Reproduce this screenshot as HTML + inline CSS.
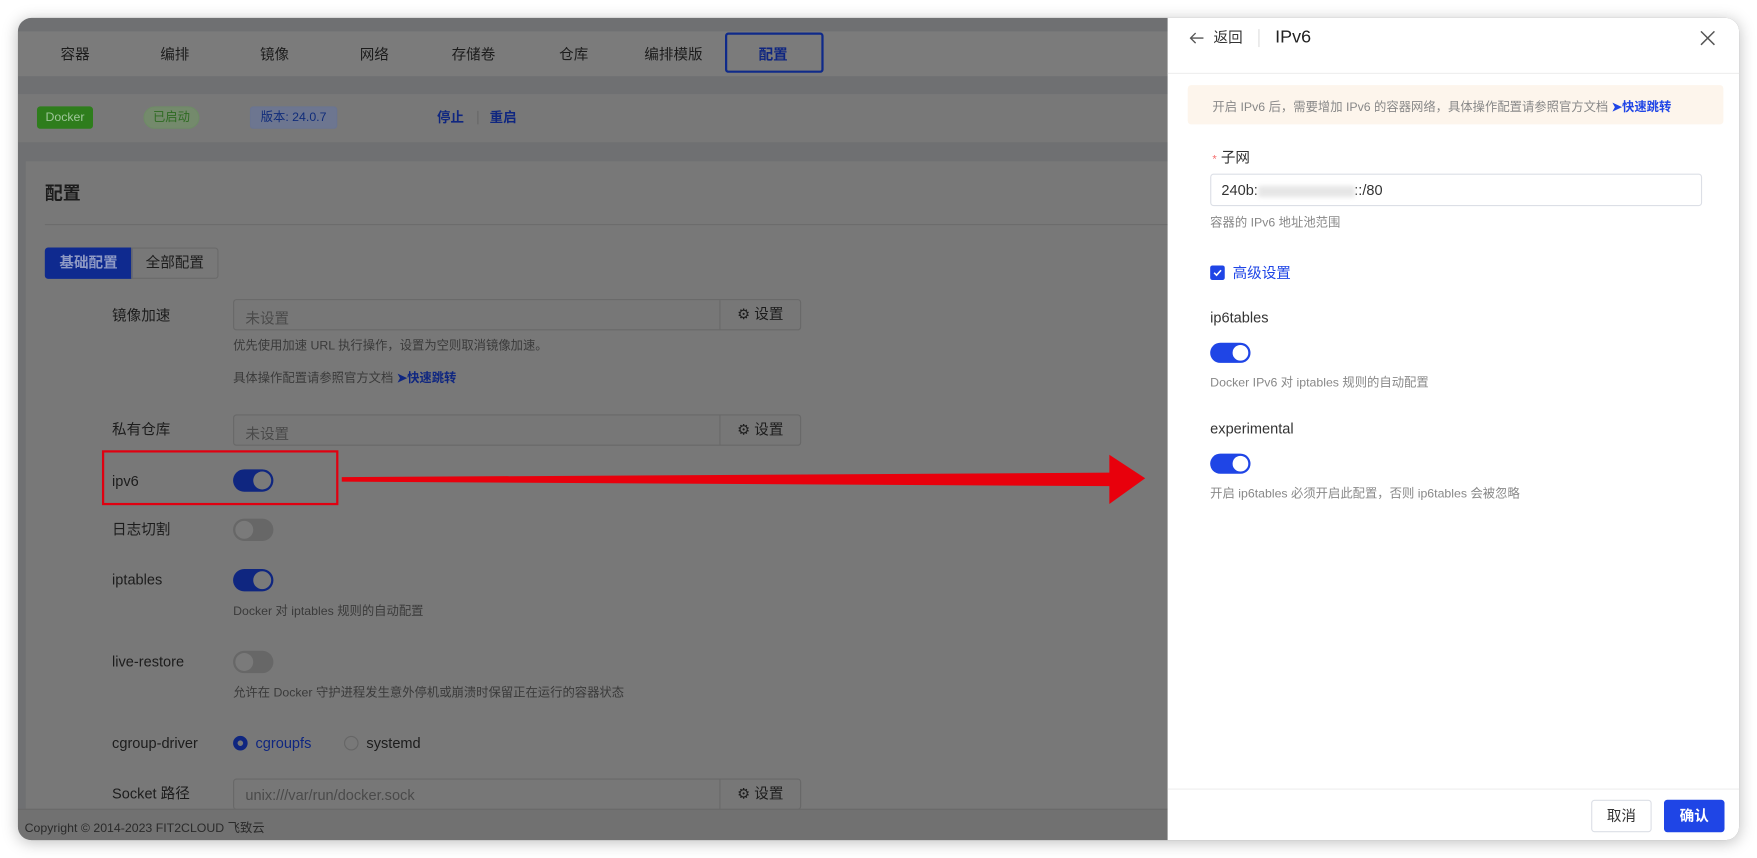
<!DOCTYPE html>
<html><head><meta charset="utf-8"><style>
*{box-sizing:border-box;margin:0;padding:0}
html,body{width:1757px;height:858px;overflow:hidden;background:#fff;font-family:"Liberation Sans","Noto Sans CJK SC",sans-serif}
#s{position:absolute;left:0;top:0;width:1568px;height:766px;transform:scale(1.12054,1.1201);transform-origin:0 0}
.a{position:absolute}
.win{left:16px;top:16px;width:1536px;height:734px;border-radius:12px;overflow:hidden;background:#6f7072;box-shadow:0 2px 14px rgba(0,0,0,.25)}
.t{position:absolute;font-size:13px;color:#1c1c1c;white-space:nowrap;line-height:1}
.h{font-size:11px;color:#3a3a3a}
.inp{position:absolute;height:28px;border:1px solid #686868;background:#777;border-radius:3px}
.inp span{position:absolute;left:10px;top:6px;font-size:13px;color:#4a4a4a}
.inp b{position:absolute;right:0;top:0;width:72px;height:26px;border-left:1px solid #686868;font-weight:normal;font-size:13px;color:#1c1c1c;text-align:center;line-height:26px}
.sw{position:absolute;width:36px;height:20px;border-radius:10px;background:#0f2680}
.sw:after{content:"";position:absolute;right:2px;top:2px;width:16px;height:16px;border-radius:50%;background:#7a7a7a}
.sw.off{background:#676767}.sw.off:after{left:2px;right:auto}
.sw2{position:absolute;width:36px;height:18px;border-radius:9px;background:#1f45e6}
.sw2:after{content:"";position:absolute;right:2px;top:2px;width:14px;height:14px;border-radius:50%;background:#fff}
</style></head><body><div id="s">
<div class="a win">
  <div class="a" style="left:0;top:12px;width:1100px;height:40px;background:#7b7b7b"></div>
  <div class="t" style="left:38px;top:26px">容器</div>
  <div class="t" style="left:127px;top:26px">编排</div>
  <div class="t" style="left:216px;top:26px">镜像</div>
  <div class="t" style="left:305px;top:26px">网络</div>
  <div class="t" style="left:387px;top:26px">存储卷</div>
  <div class="t" style="left:483px;top:26px">仓库</div>
  <div class="t" style="left:559px;top:26px">编排模版</div>
  <div class="a" style="left:631px;top:13px;width:88px;height:36px;border:2px solid #0f2a8a;border-radius:3px"></div>
  <div class="t" style="left:661px;top:26px;color:#0f2680;font-weight:bold">配置</div>

  <div class="a" style="left:0;top:68px;width:1100px;height:43px;background:#787878"></div>
  <div class="a" style="left:17px;top:79px;width:50px;height:20px;background:#2e7d1c;border-radius:3px;color:#9fc79a;font-size:11px;text-align:center;line-height:20px">Docker</div>
  <div class="a" style="left:112px;top:79px;width:50px;height:20px;background:#748a6c;border:1px solid #6e8a66;border-radius:10px;color:#2e6b22;font-size:11px;text-align:center;line-height:18px">已启动</div>
  <div class="a" style="left:207px;top:79px;width:78px;height:20px;background:#6d7690;border:1px solid #6a7490;border-radius:3px;color:#102c7a;font-size:11px;text-align:center;line-height:18px">版本: 24.0.7</div>
  <div class="t" style="left:374px;top:83px;color:#0f2680;font-weight:bold;font-size:12px">停止</div>
  <div class="a" style="left:410px;top:83px;width:1px;height:12px;background:#666"></div>
  <div class="t" style="left:421px;top:83px;color:#0f2680;font-weight:bold;font-size:12px">重启</div>

  <div class="a" style="left:7px;top:128px;width:1100px;height:600px;background:#787878"></div>
  <div class="t" style="left:24px;top:150px;font-size:16px;font-weight:bold">配置</div>
  <div class="a" style="left:24px;top:184px;width:1100px;height:1px;background:#6c6c6c"></div>
  <div class="a" style="left:24px;top:205px;width:78px;height:28px;background:#0f2a8f;border-radius:3px 0 0 3px;color:#8f9ac4;font-size:13px;text-align:center;line-height:28px;font-weight:bold">基础配置</div>
  <div class="a" style="left:101px;top:205px;width:78px;height:28px;border:1px solid #6a6a6a;border-radius:0 3px 3px 0;font-size:13px;text-align:center;line-height:26px;color:#1c1c1c">全部配置</div>

  <div class="t" style="left:84px;top:259px">镜像加速</div>
  <div class="inp" style="left:192px;top:251px;width:507px"><span>未设置</span><b>⚙ 设置</b></div>
  <div class="t h" style="left:192px;top:288px">优先使用加速 URL 执行操作，设置为空则取消镜像加速。</div>
  <div class="t h" style="left:192px;top:317px">具体操作配置请参照官方文档 <span style="color:#0f2680;font-weight:bold">&#10148;快速跳转</span></div>
  <div class="t" style="left:84px;top:361px">私有仓库</div>
  <div class="inp" style="left:192px;top:354px;width:507px"><span>未设置</span><b>⚙ 设置</b></div>

  <div class="a" style="left:75px;top:386px;width:211px;height:49px;border:2px solid #e00010"></div>
  <div class="t" style="left:84px;top:407px">ipv6</div>
  <div class="sw" style="left:192px;top:403px"></div>
  <div class="t" style="left:84px;top:450px">日志切割</div>
  <div class="sw off" style="left:192px;top:447px"></div>
  <div class="t" style="left:84px;top:495px">iptables</div>
  <div class="sw" style="left:192px;top:492px"></div>
  <div class="t h" style="left:192px;top:525px">Docker 对 iptables 规则的自动配置</div>
  <div class="t" style="left:84px;top:568px">live-restore</div>
  <div class="sw off" style="left:192px;top:565px"></div>
  <div class="t h" style="left:192px;top:598px">允许在 Docker 守护进程发生意外停机或崩溃时保留正在运行的容器状态</div>
  <div class="t" style="left:84px;top:641px">cgroup-driver</div>
  <div class="a" style="left:192px;top:641px;width:13px;height:13px;border-radius:50%;border:4px solid #0f2680;background:#777"></div>
  <div class="t" style="left:212px;top:641px;color:#0f2680">cgroupfs</div>
  <div class="a" style="left:291px;top:641px;width:13px;height:13px;border-radius:50%;border:1px solid #666"></div>
  <div class="t" style="left:311px;top:641px">systemd</div>
  <div class="t" style="left:84px;top:686px">Socket 路径</div>
  <div class="inp" style="left:192px;top:679px;width:507px;height:28px"><span>unix:///var/run/docker.sock</span><b>⚙ 设置</b></div>

  <div class="a" style="left:0;top:706px;width:1100px;height:28px;background:#717171;border-top:1px solid #6a6a6a"></div>
  <div class="t" style="left:6px;top:719px;font-size:11px;color:#2a2a2a">Copyright © 2014-2023 FIT2CLOUD 飞致云</div>
</div>

<svg class="a" style="left:300px;top:400px" width="730" height="56">
  <polygon points="5,26 690,22 690,6 722,27 690,50 690,34 5,30" fill="#e8000c"/>
</svg>

<div class="a" style="left:1042px;top:16px;width:510px;height:734px;background:#fff;border-radius:0 12px 12px 0">
  <svg class="a" style="left:19px;top:12px" width="14" height="12"><path d="M13 6H2M6 1.5L1.5 6L6 10.5" stroke="#555" stroke-width="1.2" fill="none"/></svg>
  <div class="t" style="left:41px;top:11px;font-size:13px;color:#333">返回</div>
  <div class="a" style="left:81px;top:10px;width:1px;height:16px;background:#ddd"></div>
  <div class="t" style="left:96px;top:10px;font-size:16px;color:#222">IPv6</div>
  <svg class="a" style="left:475px;top:11px" width="14" height="14"><path d="M1 1L13 13M13 1L1 13" stroke="#555" stroke-width="1.3"/></svg>
  <div class="a" style="left:0;top:49px;width:510px;height:1px;background:#eee"></div>
  <div class="a" style="left:18px;top:60px;width:478px;height:35px;background:#fdf5ec;border-radius:3px"></div>
  <div class="t" style="left:40px;top:75px;font-size:11px;color:#888">开启 IPv6 后，需要增加 IPv6 的容器网络，具体操作配置请参照官方文档 <span style="color:#1f45e6;font-weight:bold">&#10148;快速跳转</span></div>
  <div class="t" style="left:40px;top:118px;color:#333"><span style="color:#f56c6c;font-size:10px">*</span> 子网</div>
  <div class="a" style="left:38px;top:139px;width:439px;height:29px;border:1px solid #dcdfe6;border-radius:3px"></div>
  <div class="t" style="left:48px;top:147px;color:#333">240b:<span style="display:inline-block;width:86px;height:10px;background:#e6e6e6;filter:blur(2px);vertical-align:middle"></span>::/80</div>
  <div class="t h" style="left:38px;top:178px;color:#888">容器的 IPv6 地址池范围</div>
  <div class="a" style="left:38px;top:221px;width:13px;height:13px;background:#1f45e6;border-radius:2px"></div>
  <svg class="a" style="left:38px;top:221px" width="13" height="13"><path d="M3.5 6.5L5.7 8.7L9.7 4.3" stroke="#fff" stroke-width="1.4" fill="none"/></svg>
  <div class="t" style="left:58px;top:221px;color:#1f45e6">高级设置</div>
  <div class="t" style="left:38px;top:261px;color:#333">ip6tables</div>
  <div class="sw2" style="left:38px;top:290px"></div>
  <div class="t h" style="left:38px;top:321px;color:#888">Docker IPv6 对 iptables 规则的自动配置</div>
  <div class="t" style="left:38px;top:360px;color:#333">experimental</div>
  <div class="sw2" style="left:38px;top:389px"></div>
  <div class="t h" style="left:38px;top:420px;color:#888">开启 ip6tables 必须开启此配置，否则 ip6tables 会被忽略</div>
  <div class="a" style="left:0;top:688px;width:510px;height:1px;background:#eee"></div>
  <div class="a" style="left:378px;top:698px;width:54px;height:29px;border:1px solid #dcdfe6;border-radius:3px;font-size:13px;color:#333;text-align:center;line-height:27px">取消</div>
  <div class="a" style="left:443px;top:698px;width:54px;height:29px;background:#1f45e6;border-radius:3px;font-size:13px;color:#fff;text-align:center;line-height:29px;font-weight:bold">确认</div>
</div>
</div></body></html>
